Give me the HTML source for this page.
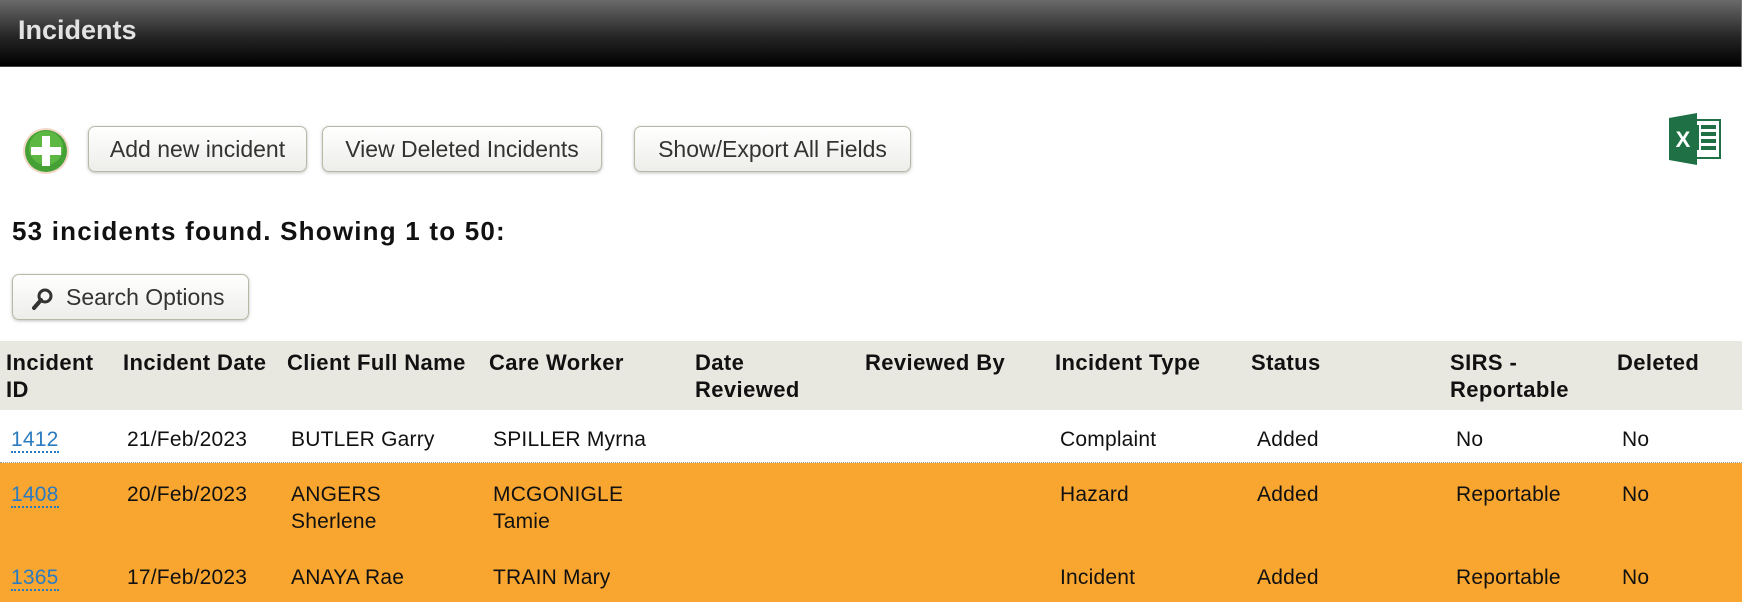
<!DOCTYPE html>
<html><head><meta charset="utf-8"><style>
*{margin:0;padding:0;box-sizing:border-box}
body{width:1755px;height:602px;overflow:hidden;background:#fff;font-family:"Liberation Sans",Arial,sans-serif;position:relative}
.hdr{position:absolute;left:0;top:0;width:1742px;height:67px;background:linear-gradient(#6a6a6a,#262626 55%,#000);border-right:1px solid #777;border-bottom:1px solid #444}
.hdr span{position:absolute;left:18px;top:15px;font-size:27px;font-weight:bold;color:#e2e2e2}
.btn{position:absolute;height:46px;border:1px solid #b9b9a8;border-radius:7px;background:linear-gradient(#fff,#ededea);box-shadow:0 1px 3px rgba(0,0,0,.25);font-size:23px;color:#333;text-align:center;line-height:44px}
.a{position:absolute;white-space:nowrap}
.th{font-weight:bold;font-size:22px;letter-spacing:0.4px;color:#111;line-height:27px}
.td{font-size:21px;letter-spacing:0.2px;color:#111;line-height:27px}
.lnk{color:#2a7bc0;border-bottom:2px dotted #2a7bc0;line-height:22px}
</style></head><body>
<div class="hdr"><span>Incidents</span></div>

<svg class="a" style="left:21px;top:126px" width="50" height="50" viewBox="0 0 50 50">
<circle cx="25" cy="25" r="23" fill="#f3d9c9"/>
<circle cx="25" cy="25" r="21" fill="#45a035"/>
<circle cx="25" cy="22" r="17" fill="#5cb843"/>
<rect x="21" y="10" width="8" height="30" fill="#fff"/>
<rect x="10" y="21" width="30" height="8" fill="#fff"/>
</svg>
<div class="btn" style="left:88px;top:126px;width:219px">Add new incident</div>
<div class="btn" style="left:322px;top:126px;width:280px">View Deleted Incidents</div>
<div class="btn" style="left:634px;top:126px;width:277px">Show/Export All Fields</div>

<svg class="a" style="left:1665px;top:112px" width="58" height="54" viewBox="0 0 58 54">
<rect x="24" y="8" width="31" height="38" fill="#fff" stroke="#1f7145" stroke-width="2"/>
<g fill="#1f7145"><rect x="36" y="13" width="15" height="4"/><rect x="36" y="20" width="15" height="4"/><rect x="36" y="27" width="15" height="4"/><rect x="36" y="34" width="15" height="4"/><rect x="28" y="13" width="6" height="25"/></g>
<path d="M4 6 L32 1 L32 53 L4 48 Z" fill="#1f7145"/>
<text x="18" y="35" font-family="Liberation Sans" font-weight="bold" font-size="22" fill="#fff" text-anchor="middle">X</text>
</svg>

<div class="a" style="left:12px;top:216px;font-size:26px;letter-spacing:1.2px;font-weight:bold;color:#111">53 incidents found. Showing 1 to 50:</div>

<div class="btn" style="left:12px;top:274px;width:237px;text-align:left;padding-left:53px">Search Options</div>
<svg class="a" style="left:31px;top:287px" width="24" height="24" viewBox="0 0 24 24">
<circle cx="14" cy="9" r="6" fill="none" stroke="#333" stroke-width="3"/>
<line x1="10" y1="13" x2="3" y2="21" stroke="#333" stroke-width="4" stroke-linecap="round"/>
</svg>

<div class="a" style="left:0;top:341px;width:1742px;height:69px;background:#e9e8e0"></div>
<div class="a" style="left:0;top:463px;width:1742px;height:139px;background:#f9a630"></div>
<div class="a" style="left:0;top:462px;width:1742px;border-top:1px dotted #999"></div>

<div class="a th" style="left:6px;top:349px">Incident<br>ID</div>
<div class="a th" style="left:123px;top:349px">Incident Date</div>
<div class="a th" style="left:287px;top:349px">Client Full Name</div>
<div class="a th" style="left:489px;top:349px">Care Worker</div>
<div class="a th" style="left:695px;top:349px">Date<br>Reviewed</div>
<div class="a th" style="left:865px;top:349px">Reviewed By</div>
<div class="a th" style="left:1055px;top:349px">Incident Type</div>
<div class="a th" style="left:1251px;top:349px">Status</div>
<div class="a th" style="left:1450px;top:349px">SIRS -<br>Reportable</div>
<div class="a th" style="left:1617px;top:349px">Deleted</div>

<div class="a td" style="left:11px;top:426px"><span class="lnk">1412</span></div>
<div class="a td" style="left:127px;top:426px">21/Feb/2023</div>
<div class="a td" style="left:291px;top:426px">BUTLER Garry</div>
<div class="a td" style="left:493px;top:426px">SPILLER Myrna</div>
<div class="a td" style="left:1060px;top:426px">Complaint</div>
<div class="a td" style="left:1257px;top:426px">Added</div>
<div class="a td" style="left:1456px;top:426px">No</div>
<div class="a td" style="left:1622px;top:426px">No</div>

<div class="a td" style="left:11px;top:481px"><span class="lnk">1408</span></div>
<div class="a td" style="left:127px;top:481px">20/Feb/2023</div>
<div class="a td" style="left:291px;top:481px">ANGERS<br>Sherlene</div>
<div class="a td" style="left:493px;top:481px">MCGONIGLE<br>Tamie</div>
<div class="a td" style="left:1060px;top:481px">Hazard</div>
<div class="a td" style="left:1257px;top:481px">Added</div>
<div class="a td" style="left:1456px;top:481px">Reportable</div>
<div class="a td" style="left:1622px;top:481px">No</div>

<div class="a td" style="left:11px;top:564px"><span class="lnk">1365</span></div>
<div class="a td" style="left:127px;top:564px">17/Feb/2023</div>
<div class="a td" style="left:291px;top:564px">ANAYA Rae</div>
<div class="a td" style="left:493px;top:564px">TRAIN Mary</div>
<div class="a td" style="left:1060px;top:564px">Incident</div>
<div class="a td" style="left:1257px;top:564px">Added</div>
<div class="a td" style="left:1456px;top:564px">Reportable</div>
<div class="a td" style="left:1622px;top:564px">No</div>
</body></html>
